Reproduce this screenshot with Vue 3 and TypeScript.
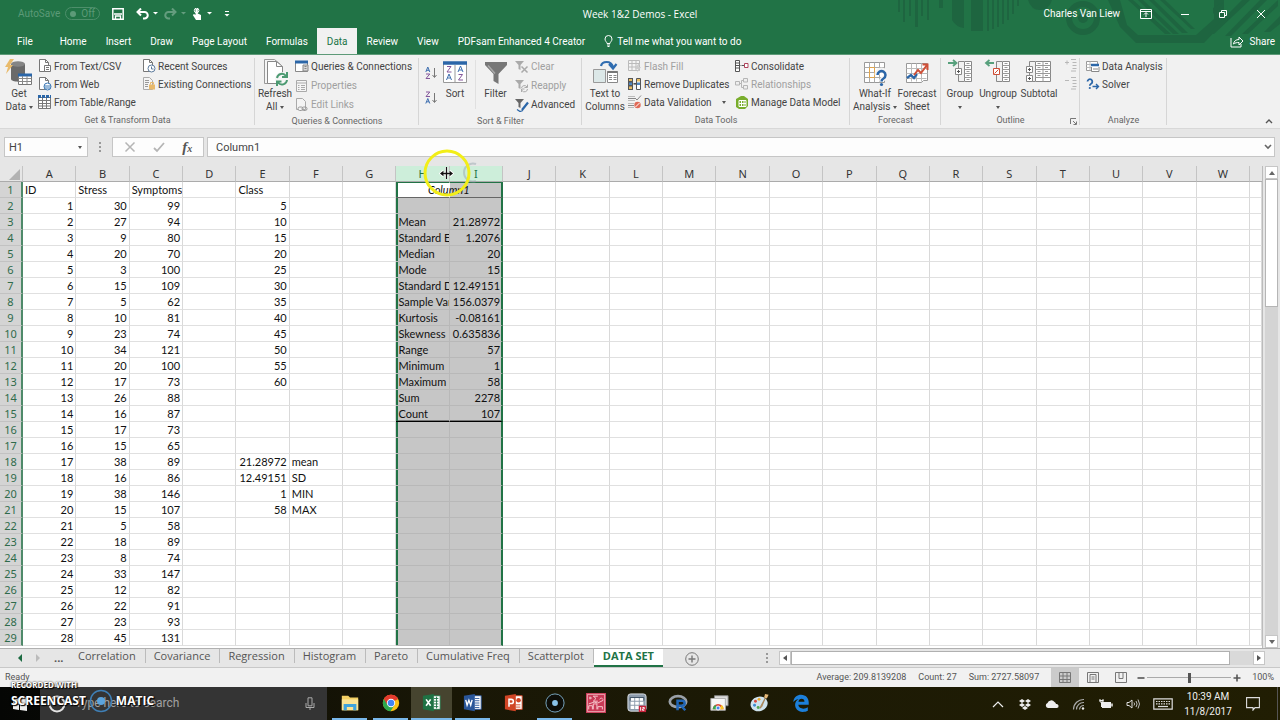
<script setup lang="ts">
import { ref } from 'vue'

interface SmallCommand { label: string; icon: string; off?: boolean; menu?: boolean }
interface App { name: string; icon: string; open?: boolean; active?: boolean }

const menuTabs = ['File', 'Home', 'Insert', 'Draw', 'Page Layout', 'Formulas', 'Data', 'Review', 'View', 'PDFsam Enhanced 4 Creator']

const page = '<path d="M1.5 .5h6l3 3v9h-9z" fill="#fff" stroke="#777"/><path d="M7.500 .5v3h3" fill="none" stroke="#777"/>'
const palePage = '<path d="M1.500 .5h6l3 3v9h-9z" fill="#f4f4f4" stroke="#aaa"/>'
const funnelSmall = '<path d="M0 1h9L5.500 5v5l-2-1V5z" fill="VAR"/>'

const icons: Record<string, string> = {
  textCsv: page + '<path d="M6.500 6.500h6v6h-6z" fill="#fff" stroke="#777"/><path d="M8 8.500h3M8 10.500h3" stroke="#777"/>',
  web: page + '<circle cx="9.500" cy="9.500" r="3.500" fill="#fff" stroke="#3b78b5"/><path d="M6 9h7M6.500 11h6" stroke="#3b78b5"/>',
  tableRange: '<path d="M.5 2.500h12v11H.5z" fill="#fff" stroke="#777"/><path d="M.5 5.500h12M.5 8.500h12M.5 11h12M4.500 2v11M8.500 2v11" stroke="#777"/><path d="M0 1.500h13" stroke="#2b66a8" stroke-width="3" stroke-dasharray="3 1"/>',
  recent: page + '<circle cx="9.500" cy="9.500" r="3.500" fill="#fff" stroke="#5b7a9c"/><path d="M9.500 7.500v2.500h2" fill="none" stroke="#5b7a9c"/>',
  existing: palePage + '<path d="M3 3.500h4M3 5.500h4M3 7.500h3M3 9.500h3" stroke="#999"/><path d="M7 7.500v5h6v-5z" fill="#e8b96a"/><path d="M8.500 7.500v-2h3v2" fill="none" stroke="#e8b96a"/>',
  queries: '<path d="M.5 1.500h12v10H.5z" fill="#fff" stroke="#888"/><path d="M0 2h13" stroke="#2b66a8" stroke-width="3"/><path d="M8 5h5v6H8z" fill="#d8d8d8" stroke="#888"/><path d="M9.500 6.500h2M9.500 8.500h2" stroke="#888"/>',
  properties: '<path d="M1.500 1.500h10v11h-10z" fill="#f6f6f6" stroke="#aaa"/><path d="M1 4h11M3 6.500h1.500M6 6.500h4M3 8.500h1.500M6 8.500h4M3 10.500h1.500M6 10.500h4" stroke="#aaa"/>',
  links: '<path d="M1.500 .5h6l3 3v8h-9z" fill="#f4f4f4" stroke="#aaa"/><rect x="3" y="9" width="5" height="3.500" rx="1.700" fill="#f4f4f4" stroke="#999"/><rect x="7" y="9" width="5" height="3.500" rx="1.700" fill="none" stroke="#999"/>',
  clear: funnelSmall.replace('VAR', '#aaa') + '<path d="M6.500 6.500l6 6M12.500 6.500l-6 6" stroke="#aaa" stroke-width="1.500"/>',
  reapply: funnelSmall.replace('VAR', '#aaa') + '<path d="M6.500 9a3 3 0 0 1 5.500-1M12.500 5.500v3h-3M12.500 10a3 3 0 0 1-5.500 1.500M6.500 13v-3h3" fill="none" stroke="#aaa"/>',
  advanced: funnelSmall.replace('VAR', '#666') + '<path d="M13 4.500L7 12" stroke="#2b66a8" stroke-width="2.200"/><path d="M2 11.500l3 2 3-1" fill="none" stroke="#2b66a8" stroke-width="1.300"/>',
  flash: '<path d="M.5 1.500h11v10H.5z" fill="#f4f4f4" stroke="#bbb"/><path d="M.5 4.500h11M.5 8h11M4 1.500v10M8 1.500v10" stroke="#bbb"/><path d="M10 5l-3 5h3l-1 4 4-6h-3l2-3z" fill="#ccc"/>',
  duplicates: '<path d="M0 1h5v12H0z" fill="#555"/><path d="M1 2h3v2H1zM1 9.500h3v2.500H1z" fill="#e9bd62"/><path d="M1 5.500h3v2.500H1z" fill="#4f86c0"/><path d="M8.500 1.500h4v11h-4z" fill="#fff" stroke="#555"/><path d="M9 2h3v2.500H9z" fill="#e9bd62"/><path d="M9 5.500h3V8H9z" fill="#4f86c0"/><path d="M5.500 6.800h2.500" stroke="#444" stroke-width="1.500"/>',
  validation: '<path d="M0 3.500h7M0 10.500h6M7 3l2 2 4-4.500" fill="none" stroke="#888"/><path d="M0 1.500h7M0 5.500h7M0 8.500h6M0 12.500h6" stroke="#bbb"/><circle cx="9.500" cy="10" r="3.200" fill="#e06a57"/><path d="M7.500 12l4-4" stroke="#fff"/>',
  consolidate: '<path d="M.5 1.500h4v11h-4z" fill="#fff" stroke="#555"/><path d="M.5 4h4M.5 6.500h4M.5 9h4" stroke="#555"/><path d="M5.500 6.500h1M7 6.500h2" stroke="#555"/><path d="M9.500 4.500h3.500v4H9.500z" fill="#fff" stroke="#b0445c"/>',
  relationships: '<path d="M.5 4.500h4v3.500h-4zM8.500 1.500h4V5h-4zM8.500 8.500h4V12h-4z" fill="#eee" stroke="#b5b5b5"/><path d="M4.500 6.500h2V3.500h2M6.500 6.500v4h2" fill="none" stroke="#b5b5b5"/>',
  model: '<path d="M1 4l5-3h3l4 3v7l-3 3H4l-3-2z" fill="#79ad2c"/><path d="M4 5.500h7v6H4z" fill="none" stroke="#fff"/><path d="M4 8.500h7M6.500 5.500v6M9 5.500v6" stroke="#fff"/>',
  analysis: '<path d="M.5 2.500h11v9H.5z" fill="#fff" stroke="#999"/><path d="M.5 5.500h11M.5 8.500h11M4 2.500v9" stroke="#bbb"/><path d="M5 5.500h8.500v7H5z" fill="#fff"/><path d="M5 6h8" stroke="#2b66a8" stroke-width="2.500"/><path d="M5.500 8v4.500h7.500V8M7 10h5" fill="none" stroke="#888"/>',
  solver: '<path d="M1.500 4.500a2.400 2.400 0 1 1 3.600 2.200c-1 .6-1.300 1-1.300 2" fill="none" stroke="#2b66a8" stroke-width="1.800"/><circle cx="3.800" cy="11" r="1.100" fill="#2b66a8"/><path d="M6.500 9.500h6M10 7l2.500 2.500L10 12" fill="none" stroke="#2b66a8" stroke-width="1.400"/>',
  az: '<path d="M9.500 2v9M7.500 9l2 2.500 2-2.500" fill="none" stroke="#777"/><path d="M.8 6l2-5 2 5M1.500 4.300h2.600" fill="none" stroke="#3e6fb0"/><path d="M1 8h3.800L1 12.500h4" fill="none" stroke="#84579b"/>',
  za: '<path d="M9.500 2v9M7.500 9l2 2.500 2-2.500" fill="none" stroke="#777"/><path d="M1 1h3.800L1 5.500h4" fill="none" stroke="#84579b"/><path d="M.8 12.500l2-5 2 5M1.500 10.800h2.600" fill="none" stroke="#3e6fb0"/>',
  showDetail: '<path d="M0 3.500h4M2 1.500v4M6 .5h5M7.500 3.500h4M7.500 6.500h4M7.500 9.500h4M6 12h5" stroke="#b8b8b8"/>',
  hideDetail: '<path d="M0 3.500h4M6 .5h5M7.500 3.500h4M7.500 6.500h4M7.500 9.500h4M6 12h5" stroke="#b8b8b8"/>',
}

const bigIcons: Record<string, string> = {
  getData: '<path d="M6 5v15c0 3.500 14 3.500 14 0V5z" fill="#6a6a6a"/><ellipse cx="13" cy="5" rx="7" ry="2.800" fill="#858585"/><path d="M5 0L0 8h3l-2 7 7-9H5l4-6z" fill="#e9bb6c"/><path d="M13.500 15.500h13v10h-13z" fill="#fff" stroke="#777"/><path d="M13 16h14" stroke="#2b66a8" stroke-width="3"/><path d="M13.500 19.500h13M13.500 22.500h13M17.500 17v8M22 17v8" stroke="#888"/>',
  refresh: '<path d="M3.500 .5h10l6 5v19h-16z" fill="#f5f5f5" stroke="#999"/><path d="M6.500 2.500h9l6 5v17h-15z" fill="#fff" stroke="#888"/><path d="M15.500 2.500v5h6" fill="none" stroke="#888"/><circle cx="21" cy="20" r="7" fill="#f6f6f6"/><path d="M16 19a5 5 0 0 1 9-2M26 13v5h-5M26 21a5 5 0 0 1-9 2.500M16 27v-4.500h4.500" fill="none" stroke="#4c9a72" stroke-width="2"/>',
  sort: '<path d="M2.500 3.500h23v20h-23z" fill="#fff" stroke="#999"/><path d="M2 4h24" stroke="#2b66a8" stroke-width="3.500"/><path d="M14 6v17.500" stroke="#999"/><path d="M6 7.500h4l-4 5.500h4.500M17.500 15.500h4l-4 5.500h4.500" fill="none" stroke="#84579b"/><path d="M5.500 21l2.500-6 2.500 6M6.500 19h3M17 13l2.500-6 2.500 6M18 11h3" fill="none" stroke="#3e6fb0"/>',
  filter: '<path d="M3 3h22v3l-8.500 9v10l-5-3v-7L3 6z" fill="#777"/><path d="M6 6.500l7 8" stroke="#aaa" stroke-width="1.500"/>',
  columns: '<path d="M2.500 10.500h12v13h-12z" fill="#dce8e8" stroke="#999"/><path d="M16.500 12.500h10v11h-10z" fill="#fff" stroke="#888"/><path d="M16.500 13h10" stroke="#777" stroke-width="2"/><path d="M18 16.500h3M22.500 16.500h3M18 18.500h3M22.500 18.500h3M18 20.500h3M22.500 20.500h3" stroke="#888"/><path d="M10 7c1-5 10-6 12 1M18 5l4 4.500 3.500-4.500" fill="none" stroke="#2f6cb0" stroke-width="2.200"/>',
  whatIf: '<path d="M3.500 3.500h20v20h-20z" fill="#fff" stroke="#999"/><path d="M3.500 8.500h20M3.500 13.500h20M3.500 18.500h20M8.500 3.500v20M13.500 3.500v20M18.500 3.500v20" stroke="#aaa"/><path d="M8.500 8.500h5v10h-5z" fill="none" stroke="#e0a44c"/><path d="M16 16a4.500 4.500 0 1 1 6.500 3.500c-1.700.8-2 1.500-2 3" fill="none" stroke="#f4f4f4" stroke-width="5"/><path d="M16.500 16a4 4 0 1 1 6 3.500c-1.700.9-2 1.500-2 3" fill="none" stroke="#2b66a8" stroke-width="2.500"/><circle cx="20.500" cy="25.500" r="1.600" fill="#2b66a8"/>',
  forecast: '<path d="M3.500 4.500h21v17h-4l-2 2h-15z" fill="#fff" stroke="#999"/><path d="M3.500 9.500h21M3.500 14.500h21M3.500 19.500h20M8.500 4.500v18M13.500 4.500v18M18.500 4.500v18" stroke="#bbb"/><path d="M4 19l4-3 3 3 3-4" fill="none" stroke="#2b66a8" stroke-width="2.200"/><path d="M11 16l4-5 3 3 6-8M19.500 5.500H24.500V11" fill="none" stroke="#cf5038" stroke-width="2"/>',
  group: '<path d="M2 4h8M7 1l3.500 3L7 7" fill="none" stroke="#57a07c" stroke-width="1.800"/><path d="M18 2.500h-5.500v20H18" fill="none" stroke="#888"/><path d="M9.500 9.500h6v6h-6z" fill="#fff" stroke="#888"/><path d="M11 12.500h3M12.500 11v3" stroke="#555"/><path d="M18.500 2.500h7v20h-7z" fill="#fff" stroke="#888"/><path d="M18.500 6.500h7M18.500 10.500h7M18.500 14.500h7M18.500 18.500h7M20.500 4.500h3M20.500 8.500h3M20.500 12.500h3M20.500 16.500h3M20.500 20.500h3" stroke="#999"/>',
  ungroup: '<path d="M2 4h8M5.500 1L2 4l3.500 3" fill="none" stroke="#57a07c" stroke-width="1.800"/><path d="M18 2.500h-5.500v20H18" fill="none" stroke="#888"/><path d="M9.500 9.500h6v6h-6z" fill="#fff" stroke="#cf5038"/><path d="M10.500 14.500l4-4" stroke="#cf5038"/><path d="M18.500 2.500h7v20h-7z" fill="#fff" stroke="#888"/><path d="M18.500 6.500h7M18.500 10.500h7M18.500 14.500h7M18.500 18.500h7M20.500 4.500h3M20.500 8.500h3M20.500 12.500h3M20.500 16.500h3M20.500 20.500h3" stroke="#999"/>',
  subtotal: '<path d="M10.500 2.500h15v20h-15z" fill="#fff" stroke="#888"/><path d="M10.500 6.500h15M10.500 10.500h15M10.500 14.500h15M10.500 18.500h15M18 2.500v20M12.500 4.500h3M20 4.500h3M12.500 8.500h3M20 8.500h3M12.500 12.500h3M20 12.500h3M12.500 16.500h3M20 16.500h3" stroke="#999"/><path d="M10 2.500H4.500v20H10" fill="none" stroke="#888"/><path d="M1.500 7.500h6v6h-6zM1.500 16.500h6v6h-6z" fill="#fff" stroke="#888"/><path d="M3 10.500h3M4.500 9v3M3 19.500h3M4.500 18v3" stroke="#555"/>',
}

const getColumns: SmallCommand[][] = [
  [{ label: 'From Text/CSV', icon: 'textCsv' }, { label: 'From Web', icon: 'web' }, { label: 'From Table/Range', icon: 'tableRange' }],
  [{ label: 'Recent Sources', icon: 'recent' }, { label: 'Existing Connections', icon: 'existing' }],
]
const queryColumn: SmallCommand[] = [
  { label: 'Queries & Connections', icon: 'queries' },
  { label: 'Properties', icon: 'properties', off: true },
  { label: 'Edit Links', icon: 'links', off: true },
]
const filterColumn: SmallCommand[] = [
  { label: 'Clear', icon: 'clear', off: true },
  { label: 'Reapply', icon: 'reapply', off: true },
  { label: 'Advanced', icon: 'advanced' },
]
const toolColumns: SmallCommand[][] = [
  [{ label: 'Flash Fill', icon: 'flash', off: true }, { label: 'Remove Duplicates', icon: 'duplicates' }, { label: 'Data Validation', icon: 'validation', menu: true }],
  [{ label: 'Consolidate', icon: 'consolidate' }, { label: 'Relationships', icon: 'relationships', off: true }, { label: 'Manage Data Model', icon: 'model' }],
]
const analyzeColumn: SmallCommand[] = [{ label: 'Data Analysis', icon: 'analysis' }, { label: 'Solver', icon: 'solver' }]

const letters = 'ABCDEFGHIJKLMNOPQRSTUVW'.split('')
const stress = [30, 27, 9, 20, 3, 15, 5, 10, 23, 34, 20, 17, 26, 16, 17, 15, 38, 16, 38, 15, 5, 18, 8, 33, 12, 22, 23, 45]
const symptoms = [99, 94, 80, 70, 100, 109, 62, 81, 74, 121, 100, 73, 88, 87, 73, 65, 89, 86, 146, 107, 58, 89, 74, 147, 82, 91, 93, 131]
const stats: [string, string][] = [
  ['Mean', '21.28972'], ['Standard Error', '1.2076'], ['Median', '20'], ['Mode', '15'], ['Standard Deviation', '12.49151'],
  ['Sample Variance', '156.0379'], ['Kurtosis', '-0.08161'], ['Skewness', '0.635836'], ['Range', '57'], ['Minimum', '1'],
  ['Maximum', '58'], ['Sum', '2278'], ['Count', '107'],
]

const cells: Record<string, string> = { A1: 'ID', B1: 'Stress', C1: 'Symptoms', E1: 'Class', H1: 'Column1' }
stress.forEach((value, i) => {
  cells[`A${i + 2}`] = String(i + 1)
  cells[`B${i + 2}`] = String(value)
  cells[`C${i + 2}`] = String(symptoms[i])
})
for (let i = 0; i < 12; i++) cells[`E${i + 2}`] = String((i + 1) * 5)
stats.forEach(([name, value], i) => {
  cells[`H${i + 3}`] = name
  cells[`I${i + 3}`] = value
})
const summary: [string, string][] = [['21.28972', 'mean'], ['12.49151', 'SD'], ['1', 'MIN'], ['58', 'MAX']]
summary.forEach(([value, name], i) => {
  cells[`E${i + 18}`] = value
  cells[`F${i + 18}`] = name
})

function cellClass(col: string, row: number): Record<string, boolean> {
  const text = cells[col + row] ?? ''
  const selected = col === 'H' || col === 'I'
  return {
    num: text !== '' && !Number.isNaN(Number(text)),
    sel: selected,
    first: col === 'H',
    last: col === 'I',
    top: selected && row === 1,
    end: selected && row === 15,
  }
}

const sheets = ['Correlation', 'Covariance', 'Regression', 'Histogram', 'Pareto', 'Cumulative Freq', 'Scatterplot', 'DATA SET']
const activeSheet = ref('DATA SET')
const nameBox = ref('H1')
const formula = ref('Column1')
const zoom = ref(50)

const office = (color: string, mark: string, doc: string) =>
  `<path d="M11 3h9v15h-9z" fill="#fff" stroke="${color}"/>${doc}<path d="M1 3l12-2v19L1 18z" fill="${color}"/>${mark}`

const apps: App[] = [
  { name: 'File Explorer', open: true, icon: '<path d="M2 3h7l2 2h9v14H2z" fill="#f2cf63"/><path d="M2 7h18v12H2z" fill="#fbe394"/><path d="M4 19v-7h14v7h-3.500v-3.500h-7V19z" fill="#3fa3dc"/>' },
  { name: 'Chrome', open: true, icon: '<circle cx="11" cy="11" r="9" fill="#fbc116"/><path d="M11 11L3.200 6.500A9 9 0 0 1 18.800 6.500z" fill="#e33b2e"/><path d="M11 11l-7.800-4.500A9 9 0 0 0 10.500 20L15 13z" fill="#2da94f"/><path d="M11 6.500h8A9 9 0 0 0 3.200 6.500L7 13z" fill="#e33b2e"/><circle cx="11" cy="11" r="4.600" fill="#fff"/><circle cx="11" cy="11" r="3.600" fill="#4285f4"/>' },
  { name: 'Excel', open: true, active: true, icon: office('#1f7244', '<path d="M4.500 7l5 7M9.500 7l-5 7" stroke="#fff" stroke-width="1.800"/>', '<path d="M13 6h5M13 9h5M13 12h5M13 15h5M16 4v13" stroke="#1f7244"/>') },
  { name: 'Word', open: true, icon: office('#2a5699', '<path d="M3 7.500l1.500 6 2-5.500 2 5.500 1.500-6" fill="none" stroke="#fff" stroke-width="1.500"/>', '<path d="M13 6h5M13 8.500h5M13 11h5M13 13.500h5M13 16h5" stroke="#2a5699"/>') },
  { name: 'PowerPoint', icon: office('#d04525', '<path d="M5.500 15V7h2.500a2.200 2.200 0 0 1 0 4.600H6" fill="none" stroke="#fff" stroke-width="1.700"/>', '<circle cx="16" cy="8" r="2.500" fill="#d04525"/><path d="M13 13h5M13 15.500h5" stroke="#d04525"/>') },
  { name: 'Screencast', open: true, icon: '<circle cx="11" cy="11" r="10" fill="#0d0d08" stroke="#7fb0cc"/><circle cx="11" cy="11" r="3.200" fill="#8ac2ea"/>' },
  { name: 'Statistics', icon: '<path d="M0 0h22v22H0z" fill="#c93a56"/><path d="M1.500 1.500h19v19h-19z" fill="none" stroke="#f0b0b8"/><path d="M8 3.500h5M8 3.500l3 2.500-3 3h5M3.500 5.500h3M4.500 4v3M15 7c2-3 3 0 4 0M3 18v-4h4v4M8 18v-6h4v6M13 18v-3h5v3M3 12l6-2 4 1 6-3" fill="none" stroke="#fbd3d6"/>' },
  { name: 'Calculator', icon: '<rect x="1" y="1" width="20" height="19" rx="3" fill="#8d9bab" stroke="#e4e9ee"/><path d="M4 5h4v3.500H4zM9 5h4v3.500H9zM14 5h4v3.500h-4zM4 9.500h4V13H4zM9 9.500h4V13H9zM14 9.500h4V13h-4zM4 14h4v3.500H4zM9 14h4v3.500H9z" fill="#fff"/><path d="M3.500 8.500V5h15v3.500" fill="none" stroke="#34475c"/><rect x="13" y="14" width="8" height="7" fill="#c8233c"/><path d="M15 15.500v4M17 16h2v1.500h-2V19h2" fill="none" stroke="#fff"/>' },
  { name: 'R', icon: '<ellipse cx="11" cy="9.500" rx="9" ry="6" fill="none" stroke="#9aa0a8" stroke-width="3"/><path d="M10.500 19V8.500h5a2.800 2.800 0 0 1 0 5.600h-4M14.500 14l4.500 5" fill="none" stroke="#2166b6" stroke-width="2.800"/>' },
  { name: 'Chrome App', icon: '<path d="M6 3h15v11H6z" fill="#ddd" stroke="#888"/><path d="M2 6h16v13H2z" fill="#f7f7f7" stroke="#aaa"/><path d="M4 18a6 6 0 0 1 12 0" fill="#e0483a"/><path d="M4 18a6 6 0 0 1 3-5l3 5z" fill="#38a852"/><path d="M11 18l3-5a6 6 0 0 1 2 5z" fill="#f7c325"/><circle cx="10" cy="16.500" r="2.200" fill="#4285f4" stroke="#fff"/>' },
  { name: 'Paint', icon: '<ellipse cx="10" cy="12" rx="9.500" ry="8" fill="#cfe3ee" transform="rotate(-15 10 12)"/><circle cx="6" cy="9" r="1.600" fill="#d9483b"/><circle cx="10" cy="7" r="1.600" fill="#e8a52e"/><circle cx="5" cy="13.500" r="1.600" fill="#3e8bd0"/><circle cx="9" cy="16" r="1.600" fill="#54a852"/><path d="M18 3l-6 11-1 3 2-2z" fill="#caa06a" stroke="#8c6434" stroke-width=".6"/><path d="M16.500 1l4 1-2 4-3-1z" fill="#e5b878"/>' },
  { name: 'Edge', icon: '<path d="M2.500 10C3 4.500 7 2 11 2c5.500 0 8.500 4 8.500 8.500V13H8c.3 3 3 4.200 5.500 4.200 2 0 3.700-.6 5-1.400v3.700c-1.600.9-3.600 1.300-5.600 1.300C7.500 20.800 4.500 17 4.500 13c0-3 1.700-5.300 4-6.500-3 .5-5 2-6 3.500zM8.200 9.500h6.600c0-2-1-3.300-3.200-3.300-1.900 0-3.100 1.300-3.400 3.300z" fill="#1c80dc"/>' },
]
</script>

<template>
  <div class="window">
    <header class="title-area">
      <svg class="decor" viewBox="0 0 384 44" aria-hidden="true">
        <g fill="#1e6540">
          <path d="M2 0h2v12H2zM7 0h2v22H7zM13 0h2v16h-2zM19 0h3v27h-3zM25 0h2v16h-2zM31 0h2v20h-2zM43 0h4v8h-4z" />
          <path d="M56 0h12v28q-8-1-12-8zM75 0h12v31H75zM91 0h2v31h-2zM96 0h2v29h-2zM101 0h2v27h-2zM106 0h2v24h-2zM111 0h2v20h-2zM116 0h2v14h-2zM121 0h2v6h-2z" />
          <path d="M132 0h24q-3 10-12 10T132 0z" />
          <path d="M212 0h12l7 25 11 10h58l18-16V0h10v22l-20 21h-68l-16-16z" />
          <path d="M232 0h5l38 34h-6zM242 0h5l36 34h-6zM253 0h5l34 33h-6zM264 0h5l30 29h-4z" />
          <path d="M327 2l-2 4-8 8V8zM346 0h8l-36 34h-6zM364 0h7l-36 36h-6zM382 0v6l-30 28h-6zM384 16v8l-10 8h-6z" />
        </g>
        <circle cx="187" cy="18" r="14" fill="none" stroke="#1e6540" stroke-width="6" />
        <circle cx="187" cy="18" r="5" fill="#1e6540" />
      </svg>
      <div class="title-bar">
        <div class="quick">
          <button class="autosave" role="switch" aria-checked="false">AutoSave<span class="pill"><i></i>Off</span></button>
          <button aria-label="Save"><svg width="12" height="12" viewBox="0 0 12 12"><path d="M.8 .8h10.400v10.400H.8z" fill="none" stroke="#fff" stroke-width="1.500" /><path d="M2 6h8M3.500 11V8h5v3" fill="none" stroke="#fff" stroke-width="1.300" /></svg></button>
          <button class="undo" aria-label="Undo"><svg width="22" height="12" viewBox="0 0 22 12"><path d="M5 .5L1.500 4 5 7.500M2 4h6.500a3 3 0 0 1 0 6.500H7" fill="none" stroke="#fff" stroke-width="2" /><path d="M17 4h5l-2.500 2.500z" fill="#fff" /></svg></button>
          <button class="redo" aria-label="Redo"><svg width="22" height="12" viewBox="0 0 22 12"><path d="M8 .5L11.500 4 8 7.500M11 4H4.500a3 3 0 0 0 0 6.500H6" fill="none" stroke="#fff" stroke-width="2" /><path d="M17 4h5l-2.500 2.500z" fill="#fff" /></svg></button>
          <button aria-label="Touch mode"><svg width="20" height="12" viewBox="0 0 20 12"><path d="M3.500 1v6L2 6 .8 7l3.200 5h5V7L5.800 5.500V1z" fill="#fff" /><circle cx="4.600" cy="2.500" r="2.300" fill="none" stroke="#fff" /><path d="M15 4h5l-2.500 2.500z" fill="#fff" /></svg></button>
          <button class="customize" aria-label="Customize toolbar"><svg width="6" height="8" viewBox="0 0 6 8"><path d="M1 1.500h4" stroke="#fff" /><path d="M.5 4h5L3 6.500z" fill="#fff" /></svg></button>
        </div>
        <h1>Week 1&amp;2 Demos - Excel</h1>
        <div class="controls">
          <span>Charles Van Liew</span>
          <button aria-label="Ribbon display options"><svg width="12" height="10" viewBox="0 0 12 10"><path d="M.5 .5h11v9H.5zM.5 2.500h11M6 8V4M4 5.500l2-2 2 2" fill="none" stroke="#fff" /></svg></button>
          <button aria-label="Minimize"><svg width="10" height="10" viewBox="0 0 10 10"><path d="M1 5.500h8" stroke="#fff" /></svg></button>
          <button aria-label="Restore"><svg width="10" height="10" viewBox="0 0 10 10"><path d="M1.500 3.500h5v5h-5zM3.500 3V1.500h5v5H7" fill="none" stroke="#fff" /></svg></button>
          <button aria-label="Close"><svg width="10" height="10" viewBox="0 0 10 10"><path d="M1 1l8 8M9 1L1 9" stroke="#fff" /></svg></button>
        </div>
      </div>
      <nav class="menu" aria-label="Ribbon tabs">
        <button v-for="tab in menuTabs" :key="tab" :class="{ on: tab === 'Data', file: tab === 'File' }">{{ tab }}</button>
        <button class="tell"><svg width="9" height="12" viewBox="0 0 9 12"><path d="M3 8.500C3 7 1 6.300 1 4a3.500 3.500 0 0 1 7 0c0 2.300-2 3-2 4.500zM3 10h3M3.500 11.500h2" fill="none" stroke="#fff" /></svg>Tell me what you want to do</button>
        <button class="share"><svg width="14" height="13" viewBox="0 0 14 13"><path d="M1 3v9h10V9" fill="none" stroke="#fff" /><path d="M3.500 9C4 6 6 4.500 9 4.500V2l4 4-4 4V7.500C7 7.500 5 7.800 3.500 9z" fill="none" stroke="#fff" /></svg>Share</button>
      </nav>
    </header>

    <div class="ribbon">
      <section class="group g-get">
        <div class="tools">
          <button class="big"><svg viewBox="0 0 28 28" v-html="bigIcons.getData"></svg><span>Get<br>Data <b class="caret"></b></span></button>
          <div v-for="(column, i) in getColumns" :key="i" class="stack">
            <button v-for="c in column" :key="c.label" class="small"><svg viewBox="0 0 14 14" v-html="icons[c.icon]"></svg>{{ c.label }}</button>
          </div>
        </div>
        <h2>Get &amp; Transform Data</h2>
      </section>
      <section class="group g-query">
        <div class="tools">
          <button class="big"><svg viewBox="0 0 28 28" v-html="bigIcons.refresh"></svg><span>Refresh<br>All <b class="caret"></b></span></button>
          <div class="stack loose">
            <button v-for="c in queryColumn" :key="c.label" class="small" :disabled="c.off"><svg viewBox="0 0 14 14" v-html="icons[c.icon]"></svg>{{ c.label }}</button>
          </div>
        </div>
        <h2>Queries &amp; Connections</h2>
      </section>
      <section class="group g-sort">
        <div class="tools">
          <div class="order">
            <button aria-label="Sort A to Z"><svg viewBox="0 0 13 14" v-html="icons.az"></svg></button>
            <button aria-label="Sort Z to A"><svg viewBox="0 0 13 14" v-html="icons.za"></svg></button>
          </div>
          <button class="big"><svg viewBox="0 0 28 28" v-html="bigIcons.sort"></svg><span>Sort</span></button>
          <i class="rule"></i>
          <button class="big"><svg viewBox="0 0 28 28" v-html="bigIcons.filter"></svg><span>Filter</span></button>
          <div class="stack loose indent">
            <button v-for="c in filterColumn" :key="c.label" class="small" :disabled="c.off"><svg viewBox="0 0 14 14" v-html="icons[c.icon]"></svg>{{ c.label }}</button>
          </div>
        </div>
        <h2>Sort &amp; Filter</h2>
      </section>
      <section class="group g-tools">
        <div class="tools">
          <button class="big"><svg viewBox="0 0 28 28" v-html="bigIcons.columns"></svg><span>Text to<br>Columns</span></button>
          <div v-for="(column, i) in toolColumns" :key="i" class="stack">
            <button v-for="c in column" :key="c.label" class="small" :disabled="c.off"><svg viewBox="0 0 14 14" v-html="icons[c.icon]"></svg>{{ c.label }}<b v-if="c.menu" class="caret far"></b></button>
          </div>
        </div>
        <h2>Data Tools</h2>
      </section>
      <section class="group g-forecast">
        <div class="tools">
          <button class="big"><svg viewBox="0 0 28 28" v-html="bigIcons.whatIf"></svg><span>What-If<br>Analysis <b class="caret"></b></span></button>
          <button class="big"><svg viewBox="0 0 28 28" v-html="bigIcons.forecast"></svg><span>Forecast<br>Sheet</span></button>
        </div>
        <h2>Forecast</h2>
      </section>
      <section class="group g-outline">
        <div class="tools">
          <button class="big"><svg viewBox="0 0 28 28" v-html="bigIcons.group"></svg><span>Group<br><b class="caret"></b></span></button>
          <button class="big"><svg viewBox="0 0 28 28" v-html="bigIcons.ungroup"></svg><span>Ungroup<br><b class="caret"></b></span></button>
          <button class="big"><svg viewBox="0 0 28 28" v-html="bigIcons.subtotal"></svg><span>Subtotal</span></button>
          <div class="stack detail">
            <button aria-label="Show detail" disabled><svg viewBox="0 0 12 14" v-html="icons.showDetail"></svg></button>
            <button aria-label="Hide detail" disabled><svg viewBox="0 0 12 14" v-html="icons.hideDetail"></svg></button>
          </div>
        </div>
        <h2>Outline<button class="launcher" aria-label="Outline settings"><svg width="7" height="7" viewBox="0 0 7 7"><path d="M.5 6V.5H6M3 3l3 3M6.500 3.500v3h-3" fill="none" stroke="#777" /></svg></button></h2>
      </section>
      <section class="group g-analyze">
        <div class="tools">
          <div class="stack">
            <button v-for="c in analyzeColumn" :key="c.label" class="small"><svg viewBox="0 0 14 14" v-html="icons[c.icon]"></svg>{{ c.label }}</button>
          </div>
        </div>
        <h2>Analyze</h2>
      </section>
      <button class="collapse" aria-label="Collapse ribbon"><svg width="8" height="6" viewBox="0 0 8 6"><path d="M1 5l3-3 3 3" fill="none" stroke="#555" stroke-width="1.400" /></svg></button>
    </div>

    <div class="formula-bar">
      <div class="box name-box"><input v-model="nameBox" aria-label="Name box"><button aria-label="Name list"><b class="caret"></b></button></div>
      <i class="dots"></i>
      <div class="box entry">
        <button aria-label="Cancel"><svg width="12" height="12" viewBox="0 0 12 12"><path d="M1.500 1.500l9 9M10.500 1.500l-9 9" stroke="#b5b5b5" stroke-width="1.500" /></svg></button>
        <button aria-label="Enter"><svg width="12" height="12" viewBox="0 0 12 12"><path d="M1 7l3 3 7-8" fill="none" stroke="#b5b5b5" stroke-width="1.800" /></svg></button>
        <button class="fx" aria-label="Insert function">f<small>x</small></button>
      </div>
      <div class="box formula"><input v-model="formula" aria-label="Formula"><button aria-label="Expand formula bar"><svg width="8" height="6" viewBox="0 0 8 6"><path d="M1 1l3 3 3-3" fill="none" stroke="#666" stroke-width="1.600" /></svg></button></div>
    </div>

    <main class="sheet">
      <div class="grid-view">
        <table>
          <colgroup><col class="row-col"><col v-for="l in letters" :key="l"><col class="rest-col"></colgroup>
          <thead>
            <tr><th class="corner"><svg width="12" height="12" viewBox="0 0 12 12"><path d="M12 1v11H1z" fill="#b2b2b2" /></svg></th><th v-for="l in letters" :key="l" :class="{ picked: l === 'H' || l === 'I' }">{{ l }}</th><th></th></tr>
          </thead>
          <tbody>
            <tr v-for="r in 29" :key="r">
              <th>{{ r }}</th>
              <td v-for="l in letters" :key="l" :class="cellClass(l, r)"><span>{{ cells[l + r] }}</span></td>
              <td></td>
            </tr>
          </tbody>
        </table>
        <div class="pointer" aria-hidden="true">
          <svg width="60" height="48" viewBox="0 0 60 48">
            <path d="M53 15a9 9 0 1 0 0 17" fill="none" stroke="#9aa8b0" stroke-opacity=".5" stroke-width="2" />
            <circle cx="24" cy="24" r="22" fill="none" stroke="#f2ee18" stroke-width="3" />
            <path d="M23.500 18v12M18 24.500h11M20.500 22L18 24.500l2.500 2.500M26.500 22l2.500 2.500-2.500 2.500" fill="none" stroke="#fff" stroke-width="3" />
            <path d="M23.500 18v12M18 24.500h11M20.500 22.500L18 24.500l2.500 2M26.500 22.500l2.500 2-2.500 2" fill="none" stroke="#111" stroke-width="1.300" />
          </svg>
        </div>
      </div>
      <div class="vscroll">
        <button aria-label="Scroll up"><svg width="6" height="4" viewBox="0 0 6 4"><path d="M0 4l3-4 3 4z" fill="#666" /></svg></button>
        <div class="track"><i class="thumb"></i></div>
        <button aria-label="Scroll down"><svg width="6" height="4" viewBox="0 0 6 4"><path d="M0 0h6L3 4z" fill="#666" /></svg></button>
      </div>
    </main>

    <div class="sheet-tabs">
      <div class="tab-nav">
        <button aria-label="Previous sheets"><svg width="4" height="8" viewBox="0 0 4 8"><path d="M4 0v8L0 4z" fill="#1d6b42" /></svg></button>
        <button aria-label="Next sheets" disabled><svg width="4" height="8" viewBox="0 0 4 8"><path d="M0 0v8l4-4z" fill="#bbb" /></svg></button>
        <button aria-label="More sheets" class="more">...</button>
      </div>
      <button v-for="s in sheets" :key="s" class="tab" :class="{ on: s === activeSheet }" @click="activeSheet = s">{{ s }}</button>
      <button class="add" aria-label="New sheet"><svg width="14" height="14" viewBox="0 0 14 14"><circle cx="7" cy="7" r="6.300" fill="none" stroke="#777" /><path d="M3.500 7h7M7 3.500v7" stroke="#777" stroke-width="1.400" /></svg></button>
      <i class="dots"></i>
      <div class="hscroll">
        <button aria-label="Scroll left"><svg width="4" height="6" viewBox="0 0 4 6"><path d="M4 0v6L0 3z" fill="#555" /></svg></button>
        <div class="track"><i class="thumb"></i></div>
        <button aria-label="Scroll right"><svg width="4" height="6" viewBox="0 0 4 6"><path d="M0 0v6l4-3z" fill="#555" /></svg></button>
      </div>
    </div>

    <footer class="status">
      <span class="ready">Ready</span>
      <span>Average: 209.8139208</span><span>Count: 27</span><span>Sum: 2727.58097</span>
      <div class="views">
        <button class="on" aria-label="Normal view"><svg width="12" height="12" viewBox="0 0 12 12"><path d="M.5 .5h11v10H.5zM.5 4h11M.5 7.500h11M4 .5v10M8 .5v10" fill="none" stroke="#777" /></svg></button>
        <button aria-label="Page layout view"><svg width="12" height="12" viewBox="0 0 12 12"><path d="M.5 .5h11v10H.5zM3 2.500h6v8H3zM4.500 5h3M4.500 7h3" fill="none" stroke="#777" /></svg></button>
        <button aria-label="Page break view"><svg width="12" height="12" viewBox="0 0 12 12"><path d="M.5 .5h11v10H.5zM4 .5v6h4v-6" fill="none" stroke="#777" /></svg></button>
      </div>
      <button class="step" aria-label="Zoom out"><svg width="8" height="8" viewBox="0 0 8 8"><path d="M.5 4h7" stroke="#555" stroke-width="1.600" /></svg></button>
      <input v-model="zoom" type="range" min="0" max="100" aria-label="Zoom">
      <button class="step" aria-label="Zoom in"><svg width="8" height="8" viewBox="0 0 8 8"><path d="M.5 4h7M4 .5v7" stroke="#555" stroke-width="1.600" /></svg></button>
      <span class="percent">100%</span>
    </footer>

    <div class="taskbar">
      <button class="start" aria-label="Start"><svg width="14" height="14" viewBox="0 0 14 14"><path d="M0 2l6-1v5.700H0zM7 .9L14 0v6.700H7zM0 7.500h6V13l-6-.9zM7 7.500h7V14l-7-.9z" fill="#eee" /></svg></button>
      <label class="search">
        <svg width="18" height="18" viewBox="0 0 18 18"><circle cx="9" cy="9" r="7.500" fill="none" stroke="#e2e2e2" stroke-width="2" /></svg>
        <input type="text" placeholder="Type here to search" aria-label="Type here to search">
        <svg width="10" height="14" viewBox="0 0 10 14"><path d="M3 .8h4v8H3zM1 6v4.500h8V6M5 10.500V13" fill="none" stroke="#aaa" /></svg>
      </label>
      <div class="apps">
        <button v-for="a in apps" :key="a.name" :aria-label="a.name" :class="{ open: a.open, active: a.active }"><svg width="20" height="20" viewBox="0 0 22 22" v-html="a.icon"></svg></button>
      </div>
      <div class="tray">
        <button aria-label="Hidden icons"><svg width="14" height="12" viewBox="0 0 14 12"><path d="M2 9l5-5 5 5" fill="none" stroke="#eee" stroke-width="1.200" /></svg></button>
        <button aria-label="Dropbox"><svg width="14" height="12" viewBox="0 0 14 12"><path d="M4 1l3 2-3 2-3-2zM10 1l3 2-3 2-3-2zM4 5l3 2-3 2-3-2zM10 5l3 2-3 2-3-2zM7 8l3 2-3 2-3-2z" fill="#eee" /></svg></button>
        <button aria-label="OneDrive"><svg width="14" height="12" viewBox="0 0 14 12"><path d="M3 10a2.600 2.600 0 0 1-.5-5A4 4 0 0 1 9.500 4a3 3 0 0 1 1.500 2 2 2 0 0 1 1 4z" fill="#eee" /></svg></button>
        <button aria-label="Network"><svg width="14" height="12" viewBox="0 0 14 12"><path d="M1.500 11.500A10 10 0 0 1 12 1.500M4.500 11.500A7 7 0 0 1 12 4.500M7.500 11.500A4.500 4.500 0 0 1 12 7.500" fill="none" stroke="#aaa" stroke-width="1.200" /><circle cx="11" cy="10.500" r="1.200" fill="#eee" /></svg></button>
        <button aria-label="Battery"><svg width="14" height="12" viewBox="0 0 14 12"><path d="M3 4h9v6H3z" fill="#eee" /><path d="M13 5.500v3" stroke="#eee" stroke-width="1.500" /><path d="M.5 2.500h4M1 1v3h3V1M2.500 4v5" fill="none" stroke="#eee" /></svg></button>
        <button aria-label="Volume"><svg width="14" height="12" viewBox="0 0 14 12"><path d="M1 4.500h2L6 2v8L3 7.500H1z" fill="none" stroke="#ddd" /><path d="M8 4.500q1.200 1.500 0 3M10 3q2.200 3 0 6M12 1.500q3 4.500 0 9" fill="none" stroke="#bbb" /></svg></button>
        <button class="keys" aria-label="Touch keyboard"><svg width="20" height="12" viewBox="0 0 20 12"><path d="M.8 .8h18.400v10.400H.8z" fill="none" stroke="#ddd" stroke-width="1.200" /><path d="M3 3.500h14M3 5.800h14" stroke="#ddd" stroke-width="1.200" stroke-dasharray="1.500 1" /><path d="M5 8.500h10" stroke="#ddd" stroke-width="1.200" /></svg></button>
        <time>10:39 AM<br>11/8/2017</time>
        <button class="notes" aria-label="Notifications"><svg width="14" height="14" viewBox="0 0 14 14"><path d="M.6 .6h12.800v10H9l-2 2.500V10.600H.6z" fill="none" stroke="#ddd" stroke-width="1.100" /></svg></button>
      </div>
      <div class="watermark">
        <span class="recorded">RECORDED WITH</span>
        <div class="brand">SCREENCAST<svg width="24" height="24" viewBox="0 0 24 24"><circle cx="12" cy="12" r="10.500" fill="none" stroke="#3f7fb5" stroke-width="1.500" /><circle cx="12" cy="12" r="4" fill="#5ba3dc" /></svg>MATIC</div>
      </div>
    </div>
  </div>
</template>

<style>
body { margin: 0; }
</style>

<style scoped>
.window { display: flex; flex-direction: column; height: 100vh; overflow: hidden; background: #e6e6e6; color: #444; font: 10px/13px Roboto, "Open Sans", sans-serif; }
* { box-sizing: border-box; }
button, input { margin: 0; padding: 0; border: 0; background: none; color: inherit; font: inherit; min-width: 0; }
button { display: flex; align-items: center; justify-content: center; white-space: nowrap; }
svg { flex: none; }
h1, h2 { margin: 0; font-weight: 400; }
.caret { display: inline-block; border: 2px solid transparent; border-top: 3px solid #555; border-bottom: 0; vertical-align: middle; }
.far { margin-left: 8px; }

.title-area { position: relative; flex: none; background: #217346; color: #fff; border-bottom: 1px solid #5d9a78; }
.decor { position: absolute; right: 0; top: 0; width: 384px; height: 44px; }
.title-bar { position: relative; display: grid; grid-template-columns: 1fr auto 1fr; align-items: center; height: 27px; }
.title-bar h1 { font: 10px/14px "Open Sans", "Noto Sans", sans-serif; }
.quick { display: flex; align-items: center; padding-left: 18px; gap: 12px; }
.autosave { color: #5c9a78; gap: 5px; }
.pill { display: flex; align-items: center; gap: 5px; height: 13px; padding: 0 4px; border: 1px solid #4d8f6b; border-radius: 7px; }
.pill i { width: 6px; height: 6px; border-radius: 3px; background: #5c9a78; }
.redo { opacity: .3; margin-left: -6px; }
.redo + button { margin-left: -6px; }
.controls { display: flex; align-items: center; justify-content: flex-end; gap: 28px; padding-right: 14px; }
.controls span { margin-right: -8px; }
.menu { position: relative; display: flex; height: 27px; padding-top: 1px; }
.menu button { padding: 0 9px 0 10px; }
.menu .file { padding: 0 17px; }
.menu .on { background: #f1f1f1; color: #217346; }
.menu .tell { gap: 4px; }
.menu .share { margin-left: auto; padding-right: 5px; gap: 6px; }

.ribbon { display: flex; flex: none; height: 74px; background: #f1f1f1; border-bottom: 1px solid #d8d8d8; }
.group { flex: none; display: flex; flex-direction: column; position: relative; }
.group::after { content: ""; position: absolute; right: 0; top: 3px; bottom: 3px; width: 1px; background: #d6d6d6; }
.group h2 { position: relative; font-size: 9px; line-height: 15px; text-align: center; color: #666; }
.tools { display: grid; height: 59px; }
.g-get { width: 255px; } .g-get .tools { grid-template-columns: 38px 104px 1fr; }
.g-query { width: 164px; } .g-query .tools { grid-template-columns: 40px 1fr; }
.g-sort { width: 163px; } .g-sort .tools { grid-template-columns: 24px 24px 16px 25px 1fr; }
.g-tools { width: 268px; } .g-tools .tools { grid-template-columns: 46px 107px 1fr; }
.g-forecast { width: 91px; } .g-forecast .tools { grid-template-columns: 50px 34px; }
.g-outline { width: 139px; } .g-outline .tools { grid-template-columns: 38px 38px 44px 1fr; }
.g-analyze { width: 87px; } .g-analyze .tools { padding-left: 6px; }
.big { flex-direction: column; justify-content: flex-start; padding-top: 4px; color: #444; }
.big svg { width: 28px; height: 28px; }
.stack { padding-top: 2px; }
.indent { padding-left: 7px; }
.small { height: 18px; gap: 2px; }
.loose .small { height: 19px; }
.small svg { width: 14px; height: 14px; }
.small:disabled { color: #a0a0a0; }
.order { display: grid; align-content: start; padding-top: 5px; }
.order button { height: 25px; }
.order svg { width: 13px; height: 14px; }
.rule { width: 1px; margin: 5px auto; background: #e0e0e0; }
.detail button { width: 100%; height: 18px; }
.detail svg { width: 12px; height: 14px; }
.launcher { position: absolute; right: 3px; top: 5px; }
.collapse { margin: auto 7px 4px auto; }

.formula-bar { flex: none; display: flex; height: 37px; padding: 8px 5px 9px 4px; }
.box { display: flex; align-items: center; background: #fdfdfd; border: 1px solid #c6c6c6; font-size: 11px; }
.box input { flex: 1; outline: 0; }
.name-box { width: 84px; padding: 0 5px 0 4px; }
.dots { width: 2px; height: 11px; margin: auto 11px; background: repeating-linear-gradient(#999 0 2px, transparent 2px 4px); }
.entry { width: 92px; justify-content: space-around; padding: 0 2px; }
.fx { font: italic 700 15px/18px "Liberation Serif", serif; color: #555; }
.fx small { font-size: 10px; margin-top: 3px; }
.formula { flex: 1; margin-left: 3px; padding: 0 2px 0 8px; }

.sheet { flex: 1; display: flex; min-height: 0; }
.grid-view { flex: 1; position: relative; overflow: clip; overflow-clip-margin: 18px; border-right: 1px solid #bbb; background: #fff; }
table { width: 100%; border-spacing: 0; table-layout: fixed; font: 11px/15px Lato, "Noto Sans", sans-serif; color: #111; background: #fff; }
.row-col { width: 23px; } .rest-col { width: 12px; }
th, td { padding: 0; height: 16px; }
th { font: 11px/15px "Noto Sans", "Open Sans", sans-serif; }
thead th { background: #e6e6e6; border-right: 1px solid #c4c4c4; border-bottom: 1px solid #ababab; color: #333; }
thead th:last-child { border-right: 0; }
thead .picked { background: #cdeeda; color: #217346; }
.corner svg { display: block; margin: 0 2px 0 auto; }
tbody th { background: #d4d4d4; color: #2f6b4b; border-right: 2px solid #4f8a6a; border-bottom: 1px solid #c2c2c2; }
td { border-right: 1px solid #d9d9d9; border-bottom: 1px solid #e0e0e0; }
td span { display: block; height: 15px; padding: 0 2px; overflow: hidden; white-space: nowrap; }
.num span { text-align: right; }
.sel { background: #c6c6c6; border-color: #b8b8b8; }
.first { box-shadow: inset 2px 0 #217346; }
.last { border-right: 2px solid #217346; }
.last span { padding: 0 1px; }
.top { border-top: 1px solid #217346; border-bottom: 1px solid #666; }
.top span { height: 14px; line-height: 14px; }
.first.top { background: #fff; border-right-color: #fff; }
.first.top span { position: relative; width: 200%; text-align: center; font-style: italic; overflow: visible; }
.last.top span { display: none; }
.end { border-bottom: 1px solid #000; box-shadow: inset 0 -1px #777; }
.first.end { box-shadow: inset 2px 0 #217346, inset 0 -1px #777; }
.pointer { position: absolute; left: 423px; top: -17px; }
.vscroll { display: flex; flex-direction: column; width: 17px; padding: 0 2px; }
.vscroll button { height: 13px; background: #fff; border: 1px solid #c6c6c6; }
.vscroll .track { flex: 1; background: #d4d4d4; }
.vscroll .thumb { display: block; height: 28%; background: #fff; border: 1px solid #b5b5b5; }

.sheet-tabs { position: relative; z-index: 1; flex: none; display: flex; align-items: flex-start; height: 20px; background: #e6e6e6; border-top: 1px solid #b0b0b0; border-bottom: 1px solid #c8c8c8; font: 11px/14px "Open Sans", "Noto Sans", sans-serif; color: #555; }
.tab-nav { display: flex; align-items: center; width: 70px; height: 18px; padding-left: 18px; gap: 14px; }
.more { font-weight: 700; }
.tab { height: 14px; padding: 0 9px 0 8px; border-right: 1px solid #bbb; }
.tab.on { height: 18px; padding: 0 9px 2px; background: #fff; color: #217346; font-weight: 700; border: 0; border-bottom: 2px solid #217346; }
.add { margin: 3px 0 0 22px; }
.sheet-tabs .dots { margin: 4px 11px 0 auto; }
.hscroll { display: flex; width: 486px; height: 14px; margin: 2px 15px 0 0; }
.hscroll button { width: 12px; background: #fff; border: 1px solid #c6c6c6; }
.hscroll .track { flex: 1; background: #d9d9d9; }
.hscroll .thumb { display: block; width: 95%; height: 100%; background: #fff; border: 1px solid #b0b0b0; }

.status { flex: none; display: flex; align-items: center; height: 19px; padding: 0 6px 0 5px; background: #f1f1f1; font-size: 9px; color: #555; }
.status span { margin-right: 12px; }
.status .ready { margin-right: auto; }
.views { display: flex; }
.views button { width: 28px; height: 19px; }
.views .on { background: #cbcbcb; }
.step { width: 8px; height: 12px; margin: 0 2px; }
input[type="range"] { width: 84px; height: 12px; appearance: none; background: linear-gradient(#aaa, #aaa) center / 100% 1px no-repeat; }
input[type="range"]::-webkit-slider-thumb { appearance: none; width: 3px; height: 10px; background: #555; }
.status .percent { margin: 0 0 0 9px; }

.taskbar { position: relative; z-index: 2; flex: none; display: flex; height: 33px; background: linear-gradient(90deg, #050604, #191706 35%, #211e03); color: #eee; }
.start { width: 40px; }
.search { display: flex; align-items: center; width: 287px; padding: 0 12px 0 8px; gap: 9px; background: #343434; }
.search input { flex: 1; font-size: 12px; outline: 0; }
.search input::placeholder { color: #a2a2a2; opacity: 1; }
.apps { display: grid; grid-template-columns: repeat(12, 41px); padding-left: 2px; }
.apps button { border-bottom: 2px solid transparent; }
.apps .open { border-image: linear-gradient(90deg, transparent 3px, #79b8ea 3px calc(100% - 3px), transparent calc(100% - 3px)) 0 0 2; }
.apps .active { background: #46442f; border-image: none; border-bottom-color: #79b8ea; }
.tray { display: flex; align-items: center; gap: 13px; margin-left: auto; padding-right: 2px; }
.tray time { width: 52px; margin-left: -4px; text-align: center; line-height: 15px; }
.notes { width: 31px; height: 33px; padding-right: 18px; border-right: 1px solid #555; }
.watermark { position: absolute; left: 11px; top: -8px; color: #fff; font: 700 8px/12px "Open Sans", sans-serif; text-shadow: 0 0 2px #000, 1px 1px 1px #000; pointer-events: none; }
.recorded { display: block; }
.brand { display: flex; align-items: center; gap: 3px; height: 20px; font-size: 12px; }
</style>
